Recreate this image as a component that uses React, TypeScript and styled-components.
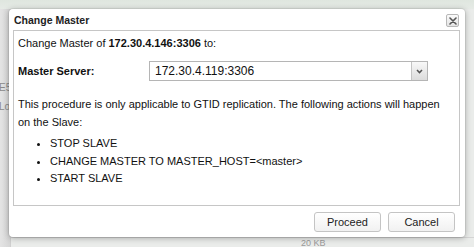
import React from 'react';
import styled, { createGlobalStyle } from 'styled-components';

const GlobalStyle = createGlobalStyle`
  html, body {
    margin: 0;
    padding: 0;
  }
  body {
    font-family: "Liberation Sans", Arial, sans-serif;
    color: #111;
    background: #e9ebe9;
  }
`;

// Page behind the modal
const Page = styled.div`
  position: relative;
  width: 474px;
  height: 247px;
  overflow: hidden;
  background: #eaecea;
  display: flex;
  flex-direction: column;
`;

const TopBand = styled.div`
  height: 9px;
  background: linear-gradient(#dfe6df, #e6ebe6);
`;

const PageBody = styled.div`
  flex: 1;
  display: flex;
`;

const SideColumn = styled.div`
  width: 10px;
  display: flex;
  flex-direction: column;
  padding-top: 74px;
  gap: 9px;
  background: linear-gradient(90deg, #e4e4e4, #d6d6d6);
  border-right: 1px solid #cfcfcf;
`;

const SideLabel = styled.span`
  font-size: 10px;
  color: #8a8a8a;
  line-height: 10px;
  margin-left: -1px;
`;

const MainArea = styled.div`
  flex: 1;
  display: flex;
  flex-direction: column;
  justify-content: flex-end;
`;

const BottomRow = styled.div`
  height: 9px;
  border-top: 1px solid #d4d4d4;
  display: flex;
  padding-left: 290px;
`;

const BottomCell = styled.span`
  font-size: 9px;
  color: #9a9a9a;
  line-height: 10px;
`;

// Modal
const Dialog = styled.div`
  position: absolute;
  left: 9px;
  top: 9px;
  width: 456px;
  height: 228px;
  background: #fff;
  border-radius: 4px;
  box-shadow: 0 1px 6px rgba(0, 0, 0, 0.3), 0 0 0 1px rgba(0, 0, 0, 0.06);
  display: flex;
  flex-direction: column;
  box-sizing: border-box;
`;

const TitleBar = styled.div`
  height: 21px;
  display: flex;
  align-items: center;
  justify-content: space-between;
  padding: 0 6px 0 5px;
`;

const Title = styled.span`
  font-size: 10.5px;
  font-weight: bold;
  color: #222;
  margin-top: 1px;
`;

const CloseButton = styled.button`
  width: 13px;
  height: 13px;
  padding: 0;
  margin-top: 2px;
  border: 1px solid #b8b8b8;
  border-radius: 2px;
  background: linear-gradient(#fafafa, #e4e4e4);
  display: flex;
  align-items: center;
  justify-content: center;
  cursor: pointer;
`;

const ContentBox = styled.div`
  margin: 0 5px 0 4px;
  border: 1px solid #c6c6c6;
  padding: 4px 5px 15px 4px;
  font-size: 11px;
  line-height: 17px;
  height: 176px;
  box-sizing: border-box;
`;

const Line = styled.div``;

const FieldRow = styled.div`
  display: flex;
  align-items: center;
  margin-top: 9px;
`;

const FieldLabel = styled.label`
  width: 131px;
  font-weight: bold;
`;

const Select = styled.div`
  width: 279px;
  height: 20px;
  box-sizing: border-box;
  border: 1px solid #b5b5b5;
  display: flex;
  background: #fff;
`;

const SelectValue = styled.span`
  flex: 1;
  font-size: 12px;
  line-height: 18px;
  padding-left: 5px;
`;

const SelectArrow = styled.span`
  width: 15px;
  border-left: 1px solid #c4c4c4;
  background: linear-gradient(#f8f8f8, #dcdcdc);
  display: flex;
  align-items: center;
  justify-content: center;
`;

const Paragraph = styled.p`
  margin: 15px 0 0;
  line-height: 17.5px;
`;

const ActionList = styled.ul`
  margin: 4px 0 0;
  padding-left: 32px;
  line-height: 17.5px;
`;

const Footer = styled.div`
  display: flex;
  justify-content: flex-end;
  gap: 7px;
  padding: 6px 10px 0 0;
`;

const DialogButton = styled.button`
  width: 67px;
  height: 20px;
  padding: 0;
  border: 1px solid #c4c4c4;
  border-radius: 3px;
  background: linear-gradient(#ffffff, #f1f1f1);
  font-family: "Liberation Sans", Arial, sans-serif;
  font-size: 11px;
  color: #222;
  cursor: pointer;
`;

export default function App() {
  return (
    <>
      <GlobalStyle />
      <Page>
        <TopBand />
        <PageBody>
          <SideColumn>
            <SideLabel>E5</SideLabel>
            <SideLabel>Lo</SideLabel>
          </SideColumn>
          <MainArea>
            <BottomRow>
              <BottomCell>20 KB</BottomCell>
            </BottomRow>
          </MainArea>
        </PageBody>

        <Dialog>
          <TitleBar>
            <Title>Change Master</Title>
            <CloseButton aria-label="Close">
              <svg width="8" height="8" viewBox="0 0 8 8">
                <path d="M1 1L7 7M7 1L1 7" stroke="#555" strokeWidth="1.6" strokeLinecap="round" />
              </svg>
            </CloseButton>
          </TitleBar>
          <ContentBox>
            <Line>
              Change Master of <b>172.30.4.146:3306</b> to:
            </Line>
            <FieldRow>
              <FieldLabel>Master Server:</FieldLabel>
              <Select>
                <SelectValue>172.30.4.119:3306</SelectValue>
                <SelectArrow>
                  <svg width="7" height="5" viewBox="0 0 7 5">
                    <path d="M1 1L3.5 3.6L6 1" fill="none" stroke="#555" strokeWidth="1.5" />
                  </svg>
                </SelectArrow>
              </Select>
            </FieldRow>
            <Paragraph>
              This procedure is only applicable to GTID replication. The following actions will happen
              on the Slave:
            </Paragraph>
            <ActionList>
              <li>STOP SLAVE</li>
              <li>CHANGE MASTER TO MASTER_HOST=&lt;master&gt;</li>
              <li>START SLAVE</li>
            </ActionList>
          </ContentBox>
          <Footer>
            <DialogButton>Proceed</DialogButton>
            <DialogButton>Cancel</DialogButton>
          </Footer>
        </Dialog>
      </Page>
    </>
  );
}
